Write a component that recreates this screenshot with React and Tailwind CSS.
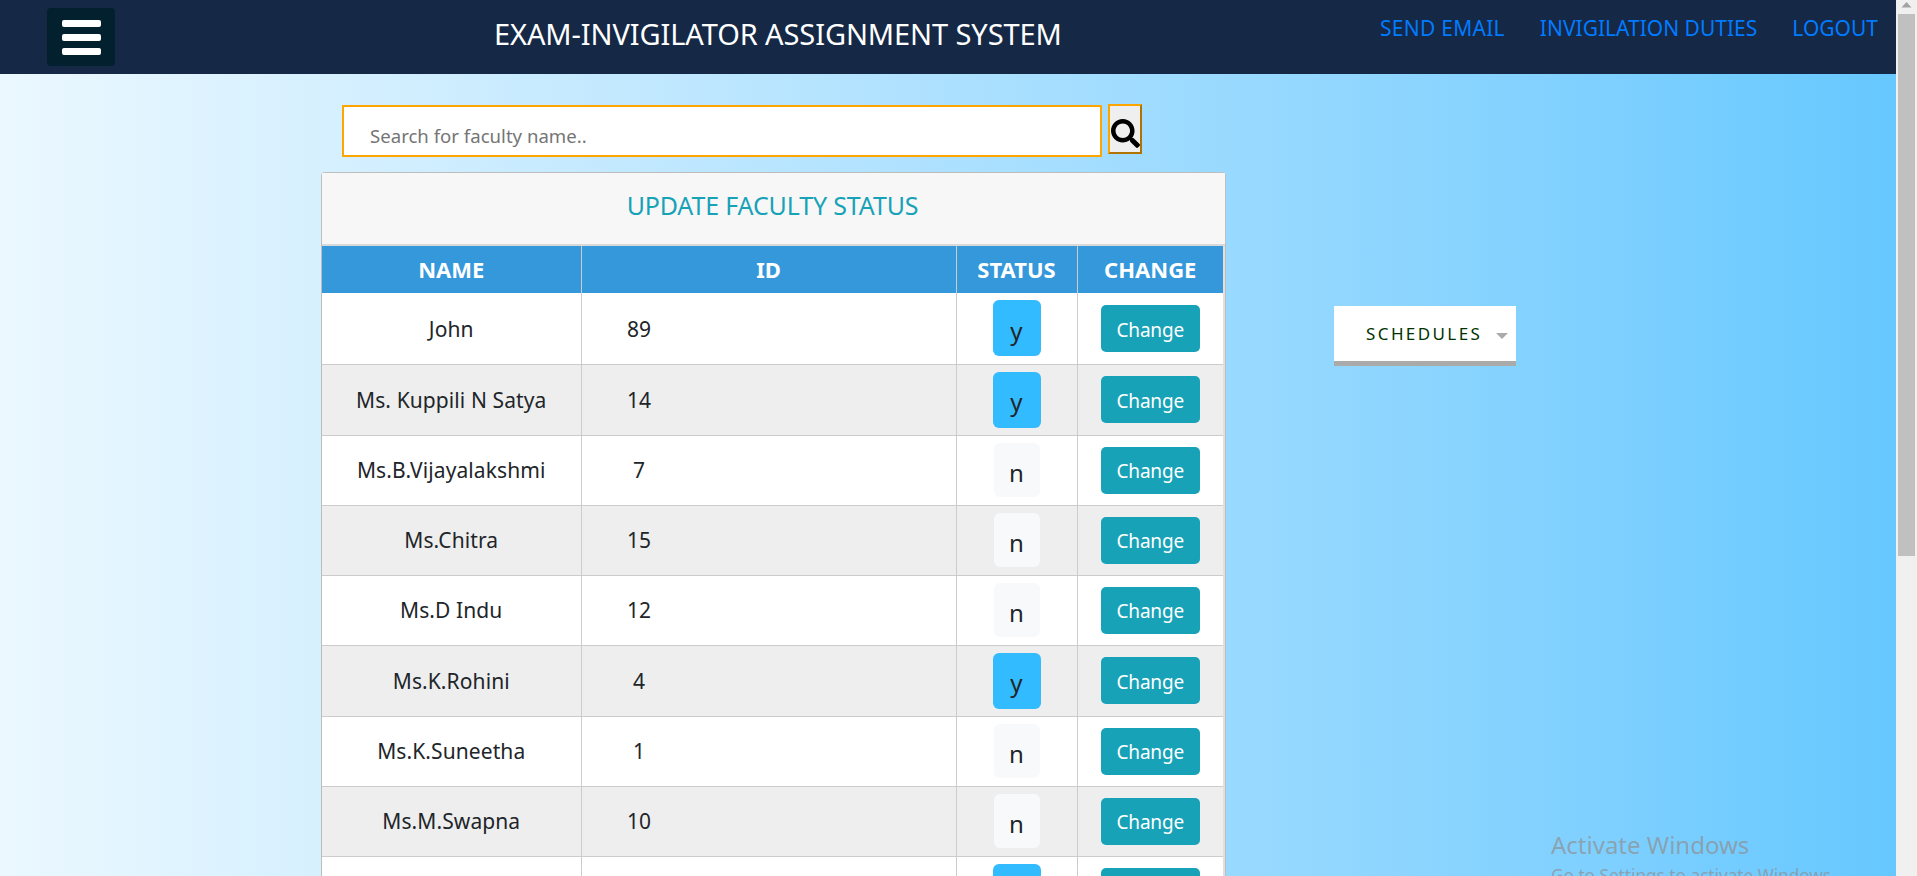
import React from "react";
import { FaSearch } from "react-icons/fa";

const rows = [
  { name: "John", id: 89, status: "y" },
  { name: "Ms. Kuppili N Satya", id: 14, status: "y" },
  { name: "Ms.B.Vijayalakshmi", id: 7, status: "n" },
  { name: "Ms.Chitra", id: 15, status: "n" },
  { name: "Ms.D Indu", id: 12, status: "n" },
  { name: "Ms.K.Rohini", id: 4, status: "y" },
  { name: "Ms.K.Suneetha", id: 1, status: "n" },
  { name: "Ms.M.Swapna", id: 10, status: "n" },
  { name: "", id: 9, status: "y" },
];

function Navbar() {
  return (
    <nav className="h-[74px] bg-[#152846] flex items-start shrink-0">
      <button className="ml-[47px] mt-2 w-[68px] h-[58px] bg-[#03202f] rounded flex flex-col items-center justify-center gap-[7px]">
        <span className="block w-[39px] h-[7px] rounded-[2px] bg-white" />
        <span className="block w-[39px] h-[7px] rounded-[2px] bg-white" />
        <span className="block w-[39px] h-[7px] rounded-[2px] bg-white" />
      </button>
      <h1 className="ml-[379px] mt-[14px] text-[29px] leading-[40px] text-white tracking-[-0.1px]">
        EXAM-INVIGILATOR ASSIGNMENT SYSTEM
      </h1>
      <div className="ml-auto mr-[18px] mt-[14px] flex gap-[35px] text-[21px] leading-[28px] text-[#007bff]">
        <a className="tracking-[0.25px]">SEND EMAIL</a>
        <a>INVIGILATION DUTIES</a>
        <a>LOGOUT</a>
      </div>
    </nav>
  );
}

function SearchBar() {
  return (
    <div className="flex items-start ml-[21px] h-[98px] pt-[30px]">
      <input
        className="mt-px w-[760px] h-[52px] bg-white border-2 border-[#ffa500] pl-[26px] pt-[8px] text-[18.6px] outline-none placeholder:text-[#757575]"
        placeholder="Search for faculty name.."
      />
      <button className="ml-[6px] w-[34px] h-[50px] bg-[#efefef] border-2 border-t-[#ffa500] border-l-[#ffa500] border-r-[#b27300] border-b-[#b27300] flex items-center justify-center pt-[8px]">
        <FaSearch className="text-black text-[29px] shrink-0" />
      </button>
    </div>
  );
}

function StatusBadge({ status }) {
  if (status === "y") {
    return (
      <span className="inline-flex items-center justify-center pt-[5px] w-[48px] h-[56px] rounded-md bg-[#33bbff] text-[24px] align-middle">
        y
      </span>
    );
  }
  return (
    <span className="inline-flex items-center justify-center pt-[5px] w-[46px] h-[54px] rounded-md bg-[#f8f9fa] text-[24px] align-middle">
      n
    </span>
  );
}

function FacultyCard() {
  return (
    <div className="w-[905px] bg-[#e0e0e0] border border-black/15 border-b-0 rounded-t">
      <div className="h-[73px] bg-[#f7f7f7] border-b-2 border-[#d9d9d9] text-center pt-[14px] pr-[2px] text-[25px] leading-[36px] tracking-[-0.15px] text-[#17a2b8]">
        UPDATE FACULTY STATUS
      </div>
      <table className="w-[901px] table-fixed border-collapse text-[#212529] text-[21px] tracking-[0.1px]">
        <colgroup>
          <col className="w-[259px]" />
          <col className="w-[375px]" />
          <col className="w-[121px]" />
          <col className="w-[146px]" />
        </colgroup>
        <thead>
          <tr className="h-[47px] bg-[#3498db] text-white text-[22px] font-bold tracking-normal">
            <th className="border-r border-[#cccccc]">NAME</th>
            <th className="border-r border-[#cccccc]">ID</th>
            <th className="border-r border-[#cccccc]">STATUS</th>
            <th>CHANGE</th>
          </tr>
        </thead>
        <tbody>
          {rows.map((r, i) => (
            <tr
              key={r.id}
              className={
                "border-b border-[#cccccc] " +
                (i % 2 === 1 ? "bg-[#eeeeee]" : "bg-white") +
                (r.status === "y" ? " h-[71px]" : " h-[70px]")
              }
            >
              <td className="border-r border-[#cccccc] text-center pt-[2px]">{r.name}</td>
              <td className="border-r border-[#cccccc] pt-[2px]">
                <div className="w-[115px] text-center">{r.id}</div>
              </td>
              <td className="border-r border-[#cccccc] text-center">
                <StatusBadge status={r.status} />
              </td>
              <td className="text-center">
                <button className="w-[99px] h-[47px] pt-[3px] rounded-[5px] bg-[#17a2b8] text-white text-[19px] tracking-[-0.2px] align-middle">
                  Change
                </button>
              </td>
            </tr>
          ))}
        </tbody>
      </table>
    </div>
  );
}

function Schedules() {
  return (
    <div className="ml-[108px] mt-[232px] w-[182px] h-[60px] bg-white border-b-[5px] border-[#aaaaaa] flex items-start shrink-0">
      <span className="ml-[32px] mt-[16px] text-[17px] leading-[24px] tracking-[2.4px] text-[#003300]">SCHEDULES</span>
      <span className="ml-[14px] mt-[27px] w-0 h-0 border-x-[6px] border-x-transparent border-t-[6px] border-t-[#aaaaaa]" />
    </div>
  );
}

function Scrollbar() {
  return (
    <div className="w-[21px] shrink-0 bg-[#f0f0f0] flex flex-col items-center">
      <svg width="21" height="14" viewBox="0 0 21 14" className="shrink-0">
        <path d="M5.5 7.5 L10.5 2 L15.5 7.5 Z" fill="#a3a3a3" />
      </svg>
      <div className="w-[17px] h-[542px] bg-[#c0c0c0]" />
    </div>
  );
}

export default function App() {
  return (
    <div
      className="h-screen overflow-hidden flex"
      style={{ fontFamily: '"Noto Sans", "Open Sans", sans-serif' }}
    >
      <div className="relative flex-1 flex flex-col overflow-hidden">
        <Navbar />
        <main className="flex-1 bg-gradient-to-r from-[#ebf8ff] to-[#66c8ff] flex pl-[321px]">
          <div className="w-[905px] shrink-0">
            <SearchBar />
            <FacultyCard />
          </div>
          <Schedules />
        </main>
        {/* windows watermark */}
        <div className="absolute left-[1551px] top-[829px] text-[#8f8f8f]/70 whitespace-nowrap">
          <div className="text-[24px] leading-[32px]">Activate Windows</div>
          <div className="text-[17.2px] leading-[24px] mt-[3px]">Go to Settings to activate Windows.</div>
        </div>
      </div>
      <Scrollbar />
    </div>
  );
}
